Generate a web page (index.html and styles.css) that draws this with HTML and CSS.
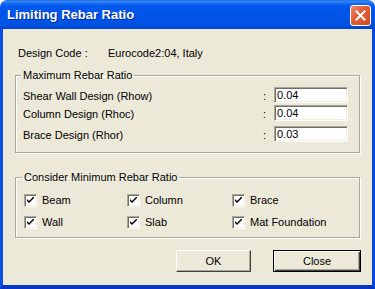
FILE: index.html
```html
<!DOCTYPE html>
<html lang="en">

<head>
    <meta charset="UTF-8">
    <meta name="viewport" content="width=device-width, initial-scale=1.0">
    <title>Limiting Rebar Ratio</title>
    <link rel="stylesheet" href="styles.css">
</head>

<body>
    <div class="window">
        <div class="titlebar">
            <span class="title">Limiting Rebar Ratio</span>
            <button class="close-btn" aria-label="Close">
                <svg width="13" height="13" viewBox="0 0 13 13">
                    <path d="M2.5 2.5 L10.5 10.5 M10.5 2.5 L2.5 10.5" stroke="#ffffff" stroke-width="2" stroke-linecap="square" fill="none" />
                </svg>
            </button>
        </div>

        <div class="content">
            <div class="code-row">
                <span class="code-label">Design Code :</span>
                <span class="code-value">Eurocode2:04, Italy</span>
            </div>

            <fieldset class="group ratio-group">
                <legend>Maximum Rebar Ratio</legend>
                <div class="ratio-row">
                    <span class="ratio-label">Shear Wall Design (Rhow)</span>
                    <span class="colon">:</span>
                    <input class="ratio-input" type="text" value="0.04">
                </div>
                <div class="ratio-row">
                    <span class="ratio-label">Column Design (Rhoc)</span>
                    <span class="colon">:</span>
                    <input class="ratio-input" type="text" value="0.04">
                </div>
                <div class="ratio-row ratio-row-last">
                    <span class="ratio-label">Brace Design (Rhor)</span>
                    <span class="colon">:</span>
                    <input class="ratio-input" type="text" value="0.03">
                </div>
            </fieldset>

            <fieldset class="group min-group">
                <legend>Consider Minimum Rebar Ratio</legend>
                <div class="check-grid">
                    <label class="check"><span class="box"><svg width="7" height="7" viewBox="0 0 7 7"><path d="M0 2 L0 4 L2 6 L7 1 L7 -1 L2 4 Z" fill="#000000" /></svg></span>Beam</label>
                    <label class="check"><span class="box"><svg width="7" height="7" viewBox="0 0 7 7"><path d="M0 2 L0 4 L2 6 L7 1 L7 -1 L2 4 Z" fill="#000000" /></svg></span>Column</label>
                    <label class="check"><span class="box"><svg width="7" height="7" viewBox="0 0 7 7"><path d="M0 2 L0 4 L2 6 L7 1 L7 -1 L2 4 Z" fill="#000000" /></svg></span>Brace</label>
                    <label class="check"><span class="box"><svg width="7" height="7" viewBox="0 0 7 7"><path d="M0 2 L0 4 L2 6 L7 1 L7 -1 L2 4 Z" fill="#000000" /></svg></span>Wall</label>
                    <label class="check"><span class="box"><svg width="7" height="7" viewBox="0 0 7 7"><path d="M0 2 L0 4 L2 6 L7 1 L7 -1 L2 4 Z" fill="#000000" /></svg></span>Slab</label>
                    <label class="check"><span class="box"><svg width="7" height="7" viewBox="0 0 7 7"><path d="M0 2 L0 4 L2 6 L7 1 L7 -1 L2 4 Z" fill="#000000" /></svg></span>Mat Foundation</label>
                </div>
            </fieldset>

            <div class="buttons">
                <button class="btn btn-ok">OK</button>
                <button class="btn btn-default">Close</button>
            </div>
        </div>
    </div>
</body>

</html>
```
FILE: styles.css
```css
html,
body {
    margin: 0;
    padding: 0;
}

body {
    background-color: #ffffff;
    font-family: "Liberation Sans", Arial, sans-serif;
    font-size: 11px;
    color: #000000;
}

.window {
    width: 375px;
    height: 289px;
    display: flex;
    flex-direction: column;
}

.titlebar {
    height: 29px;
    flex: none;
    box-sizing: border-box;
    display: flex;
    align-items: center;
    justify-content: space-between;
    padding: 0 4px 0 7px;
    border-radius: 7px 7px 0 0;
    background: linear-gradient(to bottom, #0a5ad8 0, #3d8ff7 1px, #1d70f2 3px, #0058ee 6px, #0055e8 50%, #0052e2 85%, #0042d0 100%);
}

.title {
    color: #ffffff;
    font-weight: bold;
    font-size: 13px;
    line-height: 15px;
    text-shadow: 1px 1px 0 #0a2a96;
}

.close-btn {
    width: 21px;
    height: 21px;
    margin-top: 2px;
    padding: 0;
    display: flex;
    align-items: center;
    justify-content: center;
    border: 1px solid #ffffff;
    border-radius: 3px;
    background: linear-gradient(135deg, #e98a6a 0, #e2603a 40%, #cf4a20 100%);
}

.content {
    flex: 1;
    background-color: #ece9d8;
    border-left: 3px solid #0b4ee6;
    border-right: 3px solid #0a47dc;
    border-bottom: 4px solid #0836c4;
    padding: 18px 11px 0 12px;
}

.code-row {
    display: flex;
    line-height: 13px;
    padding-left: 3px;
}

.code-label {
    width: 90px;
}

.group {
    margin: 0 1px 0 0;
    border: 1px solid #aca899;
    box-shadow: inset 1px 1px 0 #ffffff, 1px 1px 0 #ffffff;
    min-width: 0;
}

.group legend {
    padding: 0 2px;
    margin-left: -2px;
    line-height: 13px;
}

.ratio-group {
    margin-top: 9px;
    padding: 5px 11px 10px 7px;
}

.ratio-row {
    display: grid;
    grid-template-columns: 1fr 4px 74px;
    column-gap: 7px;
    align-items: center;
    height: 16px;
}

.ratio-row + .ratio-row {
    margin-top: 2px;
}

.ratio-row-last {
    margin-top: 5px !important;
}

.ratio-label {
    line-height: 13px;
    padding-top: 3px;
}

.colon {
    line-height: 13px;
    padding-top: 3px;
}

.ratio-input {
    box-sizing: border-box;
    width: 74px;
    height: 16px;
    margin: 0;
    padding: 0 2px;
    font-family: "Liberation Sans", Arial, sans-serif;
    font-size: 11px;
    color: #000000;
    background-color: #ffffff;
    border: 1px solid;
    border-color: #aca899 #ffffff #ffffff #aca899;
    box-shadow: inset 1px 1px 0 #716f64, inset -1px -1px 0 #f1efe2;
    outline: none;
}

.min-group {
    margin-top: 18px;
    padding: 10px 8px 8px 8px;
}

.check-grid {
    display: grid;
    grid-template-columns: 103px 105px auto;
    row-gap: 9px;
}

.check {
    display: flex;
    align-items: center;
    height: 13px;
    line-height: 13px;
}

.box {
    box-sizing: border-box;
    width: 13px;
    height: 13px;
    margin-right: 5px;
    display: flex;
    align-items: center;
    justify-content: center;
    background-color: #ffffff;
    border: 1px solid;
    border-color: #aca899 #ffffff #ffffff #aca899;
    box-shadow: inset 1px 1px 0 #716f64, inset -1px -1px 0 #f1efe2;
}

.buttons {
    display: flex;
    justify-content: flex-end;
    gap: 22px;
    margin-top: 12px;
}

.btn {
    box-sizing: border-box;
    height: 22px;
    margin: 0;
    padding: 0;
    font-family: "Liberation Sans", Arial, sans-serif;
    font-size: 11px;
    color: #000000;
    background-color: #ece9d8;
    border: 1px solid;
    border-color: #ffffff #404040 #404040 #ffffff;
    box-shadow: inset -1px -1px 0 #aca899;
}

.btn-ok {
    width: 75px;
}

.btn-default {
    width: 88px;
    border: 1px solid #000000;
    box-shadow: inset 1px 1px 0 #ffffff, inset -1px -1px 0 #404040, inset -2px -2px 0 #aca899;
}
```
